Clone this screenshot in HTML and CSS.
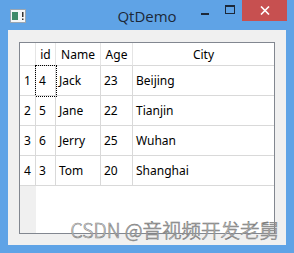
FILE: index.html
```html
<!DOCTYPE html>
<html lang="zh-CN">
<head>
    <meta charset="UTF-8">
    <title>QtDemo</title>
    <link rel="stylesheet" href="styles.css">
</head>
<body>
    <div class="window">
        <div class="titlebar">
            <div class="title-left">
                <svg class="app-icon" width="16" height="14" viewBox="0 0 16 14">
                    <rect x="0.5" y="0.5" width="15" height="13" fill="#f4f6f8" stroke="#9aa6b2"/>
                    <rect x="2" y="3" width="6" height="8" fill="#3f8a6a"/>
                    <rect x="12" y="3" width="1.5" height="5" fill="#333"/>
                    <rect x="12" y="9.5" width="1.5" height="1.5" fill="#333"/>
                </svg>
            </div>
            <div class="title-text">QtDemo</div>
            <div class="title-right">
                <div class="win-btn"><span class="glyph-min"></span></div>
                <div class="win-btn"><span class="glyph-max"></span></div>
                <div class="win-btn btn-close">
                    <svg width="10" height="9" viewBox="0 0 10 9">
                        <path d="M1 0.5 L9 8.5 M9 0.5 L1 8.5" stroke="#fff" stroke-width="1.6"/>
                    </svg>
                </div>
            </div>
        </div>

        <div class="client">
            <div class="table-view">
                <div class="row header-row">
                    <div class="cell vh"></div>
                    <div class="cell c-id">id</div>
                    <div class="cell c-name">Name</div>
                    <div class="cell c-age">Age</div>
                    <div class="cell c-city">City</div>
                </div>
                <div class="row">
                    <div class="cell vh">1</div>
                    <div class="cell c-id focused">4</div>
                    <div class="cell c-name">Jack</div>
                    <div class="cell c-age">23</div>
                    <div class="cell c-city">Beijing</div>
                </div>
                <div class="row">
                    <div class="cell vh">2</div>
                    <div class="cell c-id">5</div>
                    <div class="cell c-name">Jane</div>
                    <div class="cell c-age">22</div>
                    <div class="cell c-city">Tianjin</div>
                </div>
                <div class="row">
                    <div class="cell vh">3</div>
                    <div class="cell c-id">6</div>
                    <div class="cell c-name">Jerry</div>
                    <div class="cell c-age">25</div>
                    <div class="cell c-city">Wuhan</div>
                </div>
                <div class="row">
                    <div class="cell vh">4</div>
                    <div class="cell c-id">3</div>
                    <div class="cell c-name">Tom</div>
                    <div class="cell c-age">20</div>
                    <div class="cell c-city">Shanghai</div>
                </div>
                <div class="filler">
                    <div class="filler-vh"></div>
                </div>
            </div>
        </div>

        <div class="watermark">CSDN @音视频开发老舅</div>
    </div>
</body>
</html>
```

FILE: styles.css
```css
/* Page */
body {
    margin: 0;
    background: #5fa3e6;
    font-family: "Noto Sans", "Open Sans", sans-serif;
}

/* Window frame */
.window {
    position: relative;
    width: 294px;
    height: 253px;
    background: #5fa3e6;
    display: flex;
    flex-direction: column;
    overflow: hidden;
}

/* Title bar */
.titlebar {
    height: 30px;
    display: grid;
    grid-template-columns: 1fr auto 1fr;
    align-items: start;
}

.title-left {
    padding: 9px 0 0 10px;
}

.app-icon {
    display: block;
}

.title-text {
    font-family: "Open Sans", "Noto Sans", sans-serif;
    font-size: 15px;
    color: #1c2838;
    line-height: 30px;
    padding-top: 1px;
}

.title-right {
    display: flex;
    justify-content: flex-end;
    padding-right: 7px;
}

.win-btn {
    width: 25px;
    height: 21px;
    display: flex;
    align-items: center;
    justify-content: center;
}

.glyph-min {
    width: 8px;
    height: 2px;
    background: #1c2838;
    margin-top: 6px;
}

.glyph-max {
    width: 8px;
    height: 6px;
    border: 1px solid #1c2838;
    border-top-width: 2px;
    margin-top: -2px;
}

.btn-close {
    width: 45px;
    background: #c75050;
}

/* Client area */
.client {
    flex: 1;
    margin: 0 8px 8px;
    background: #f0f0f0;
    padding: 12px 11px 11px;
}

/* Table view */
.table-view {
    height: 100%;
    box-sizing: border-box;
    border: 1px solid #828790;
    background: #fff;
    display: flex;
    flex-direction: column;
    font-size: 12px;
    color: #000;
}

.row {
    display: flex;
    height: 30px;
}

.header-row {
    height: 23px;
}

.cell {
    box-sizing: border-box;
    border-right: 1px solid #d9d9d9;
    border-bottom: 1px solid #d9d9d9;
    padding-left: 3px;
    display: flex;
    align-items: center;
    white-space: nowrap;
}

.header-row .cell {
    justify-content: center;
    padding-left: 0;
    border-right-color: #e5e5e5;
}

.vh {
    width: 16px;
    justify-content: center;
    padding-left: 0;
}

.c-id { width: 20px; }
.c-name { width: 45px; }
.c-age { width: 32px; }

.c-city {
    width: 141px;
    border-right: none;
}

.focused {
    outline: 1px dotted #000;
    outline-offset: 0;
}

.filler {
    flex: 1;
    display: flex;
}

.filler-vh {
    width: 16px;
    background: #f0f0f0;
}

/* Watermark over the bottom edge */
.watermark {
    position: absolute;
    right: 15px;
    bottom: 9px;
    font-family: "Noto Sans CJK SC", sans-serif;
    font-size: 19.5px;
    font-weight: 300;
    color: #e8e8e8;
    -webkit-text-stroke: 0.6px #7c7c7c;
    white-space: nowrap;
}
```
